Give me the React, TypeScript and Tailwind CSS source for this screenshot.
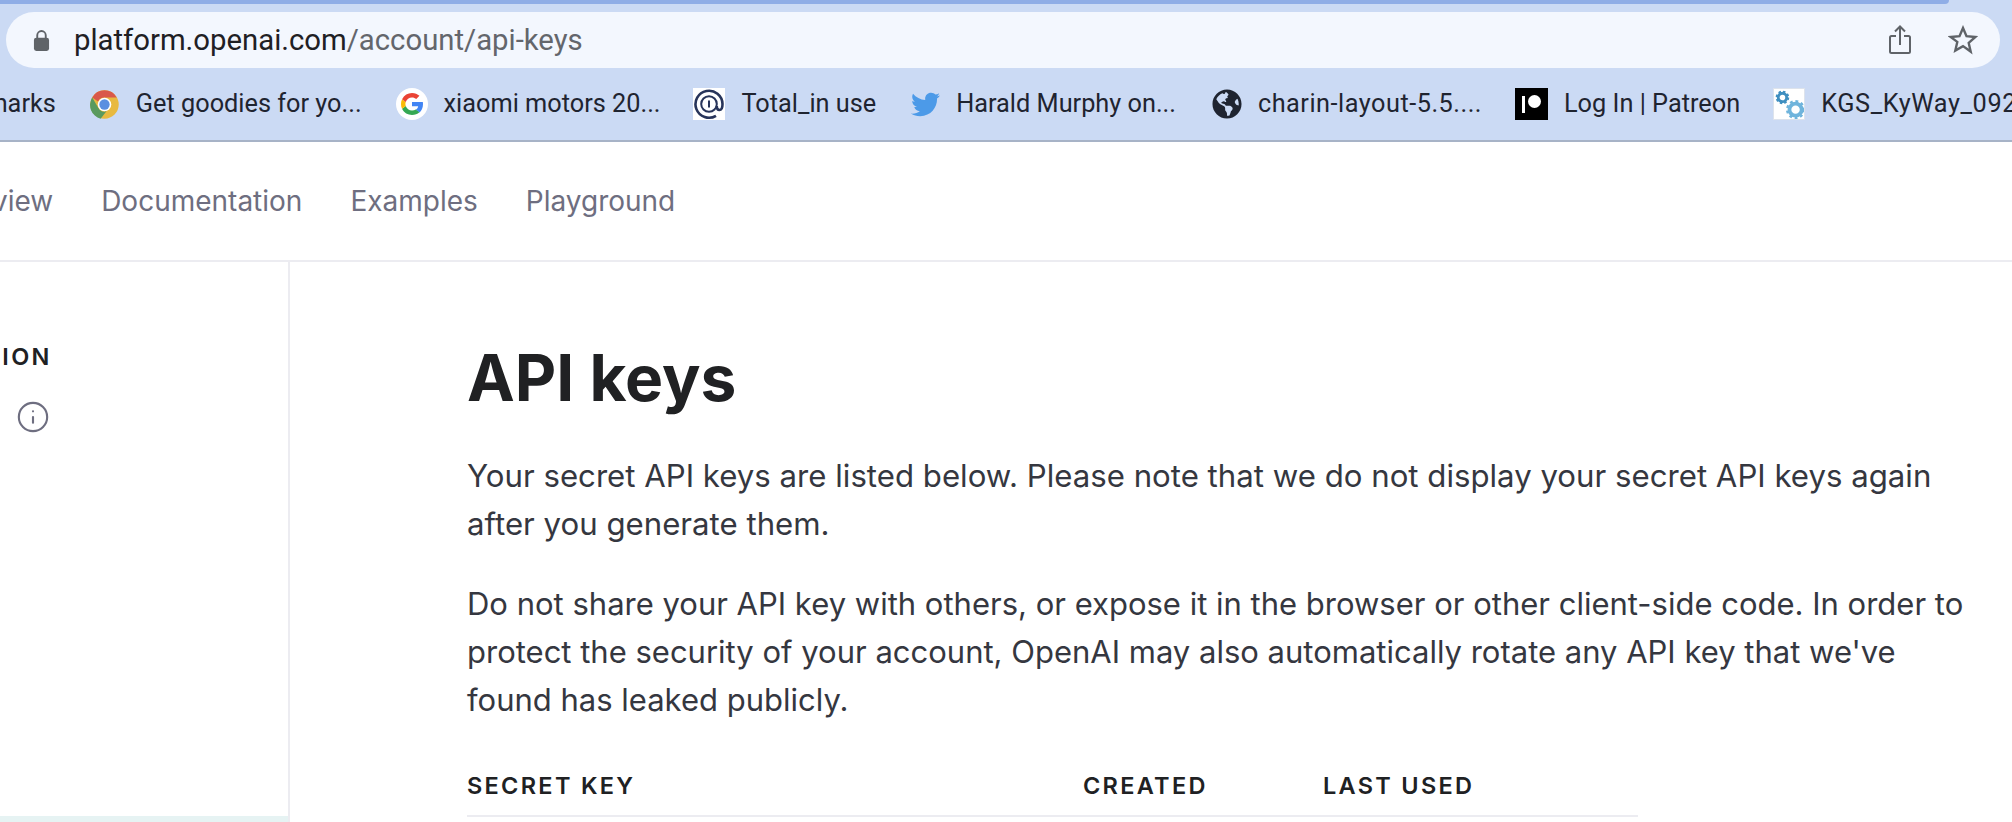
import React from "react";
import { FaTwitter, FaGlobeAmericas } from "react-icons/fa";
import { Info } from "lucide-react";

const Chrome = () => (
  <svg viewBox="0 0 48 48" className="w-[31px] h-[31px]">
    <circle cx="24" cy="24" r="22" fill="#e8b93f" />
    <path d="M24 2a22 22 0 0 1 19 11H24a11 11 0 0 0-10 6.500L5 13A22 22 0 0 1 24 2z" fill="#d9584a" />
    <path d="M5 13l9.500 16.500A11 11 0 0 0 27 34.600L18 46A22 22 0 0 1 5 13z" fill="#5a9a5e" />
    <circle cx="24" cy="24" r="10.500" fill="#fff" />
    <circle cx="24" cy="24" r="8" fill="#5b8fe0" />
  </svg>
);

const Google = () => (
  <span className="w-[32px] h-[32px] rounded-full bg-white flex items-center justify-center">
    <svg viewBox="0 0 48 48" className="w-[24px] h-[24px]">
      <path fill="#4285F4" d="M46 24.500c0-1.600-.1-3.100-.4-4.500H24v8.600h12.400c-.5 2.900-2.200 5.300-4.600 6.900l7.200 5.600C43.200 37.200 46 31.400 46 24.500z" />
      <path fill="#34A853" d="M24 46c6 0 11-2 14.800-5.400l-7.200-5.600c-2 1.300-4.600 2.100-7.600 2.100-5.800 0-10.800-3.900-12.500-9.200l-7.400 5.700C8.300 41.800 15.600 46 24 46z" />
      <path fill="#FBBC05" d="M11.500 27.900c-.5-1.300-.7-2.600-.7-3.900s.3-2.700.7-3.900l-7.400-5.700C2.700 17.200 2 20.500 2 24s.7 6.800 2.100 9.600l7.400-5.700z" />
      <path fill="#EA4335" d="M24 10.800c3.300 0 6.200 1.100 8.500 3.300l6.400-6.400C35 4.100 30 2 24 2 15.600 2 8.300 6.200 4.100 14.400l7.400 5.700c1.700-5.300 6.700-9.300 12.500-9.300z" />
    </svg>
  </span>
);

const AtIcon = () => (
  <span className="w-[32px] h-[32px] bg-white flex items-center justify-center">
    <svg viewBox="0 0 32 32" className="w-[32px] h-[32px]" fill="none" stroke="#27345a">
      <path d="M23 27.800A13.500 13.500 0 1 1 29.500 16c0 3.200-1 6-3 6s-2.800-1.800-2.800-4" strokeWidth="2.600" />
      <circle cx="16" cy="16" r="7.800" strokeWidth="2" />
      <path d="M16 12.500v7" strokeWidth="2" />
    </svg>
  </span>
);

const Patreon = () => (
  <span className="w-[33px] h-[32px] bg-black flex items-center justify-center">
    <svg viewBox="0 0 33 32" className="w-[33px] h-[32px]">
      <rect x="7" y="8" width="3" height="17" fill="#fff" />
      <circle cx="19.500" cy="13.500" r="6.500" fill="#fff" />
    </svg>
  </span>
);

const Gears = () => (
  <span className="w-[32px] h-[32px] bg-white border border-[#dde3ec]">
    <svg viewBox="0 0 32 32" className="w-full h-full" fill="none">
      <circle cx="9" cy="9" r="4.500" stroke="#3f8fc0" strokeWidth="3" />
      <circle cx="9" cy="9" r="6" stroke="#3f8fc0" strokeWidth="2.500" strokeDasharray="2.500 2.200" />
      <circle cx="23" cy="22" r="6.500" stroke="#6fb4dc" strokeWidth="4" />
      <circle cx="23" cy="22" r="9" stroke="#6fb4dc" strokeWidth="2.500" strokeDasharray="3 3" />
    </svg>
  </span>
);

const Lock = () => (
  <svg viewBox="0 0 18 24" className="w-[17px] h-[23px]" fill="none">
    <path d="M4.500 10V6.500a4.500 4.500 0 0 1 9 0V10" stroke="#5f6368" strokeWidth="2" />
    <rect x="1" y="9" width="16" height="14" rx="2.500" fill="#5f6368" />
  </svg>
);

const ShareIcon = () => (
  <svg viewBox="0 0 24 32" className="w-[24px] h-[32px]" fill="none" stroke="#5f6368" strokeWidth="2">
    <path d="M12 21V3M7 7.500 12 2.500l5 5" />
    <path d="M8 12H3.500A1.500 1.500 0 0 0 2 13.500v14A1.500 1.500 0 0 0 3.500 29h17a1.500 1.500 0 0 0 1.500-1.500v-14a1.500 1.500 0 0 0-1.500-1.500H16" />
  </svg>
);

const StarIcon = () => (
  <svg viewBox="0 0 30 30" className="w-[30px] h-[30px]" fill="none" stroke="#5f6368" strokeWidth="2.400" strokeLinejoin="miter">
    <path d="M15 3l3.500 8.200 8.900.8-6.700 5.900 2 8.700L15 21.100 7.300 25.600l2-8.700L2.600 12l8.900-.8z" />
  </svg>
);

function Mark({ icon, label, className = "" }: { icon?: React.ReactNode; label: string; className?: string }) {
  return (
    <div className={"flex items-center shrink-0 gap-[16px] " + className}>
      {icon}
      <span className="whitespace-nowrap">{label}</span>
    </div>
  );
}

export default function App() {
  return (
    <div className="w-[2012px] h-[822px] overflow-hidden bg-white flex flex-col font-['Inter',sans-serif]">
      <div className="h-[142px] shrink-0 bg-[#cbdaf4] border-b-2 border-[#a7b3c7] flex flex-col overflow-hidden">
        <div className="h-[4px] w-[1949px] shrink-0 bg-[#8fade6] rounded-br-[6px]" />
        <div className="mt-[8px] ml-[6px] w-[1994px] h-[56px] shrink-0 rounded-[28px] bg-[#f3f7fe] flex items-center pl-[27px] pr-[22px]">
          <Lock />
          <div className="ml-[24px] pt-[1px] text-[29.3px] whitespace-nowrap text-[#1f2024] font-['Roboto',sans-serif]">
            platform.openai.com<span className="text-[#63666c]">/account/api-keys</span>
          </div>
          <div className="ml-auto flex items-center gap-[36px]">
            <ShareIcon />
            <StarIcon />
          </div>
        </div>
        <div className="flex-1 flex items-center gap-[33px] text-[25.3px] text-[#1f2430] font-['Roboto',sans-serif]">
          <Mark label="Bookmarks" className="-ml-[72px]" />
          <Mark icon={<Chrome />} label="Get goodies for yo..." />
          <Mark icon={<Google />} label="xiaomi motors 20..." className="ml-[1px]" />
          <Mark icon={<AtIcon />} label="Total_in use" />
          <Mark icon={<FaTwitter className="w-[29px] h-[29px] text-[#4c9ae8]" />} label="Harald Murphy on..." className="ml-[2px]" />
          <Mark icon={<FaGlobeAmericas className="w-[30px] h-[30px] text-[#1f2430]" />} label="charin-layout-5.5...." className="ml-[3px] tracking-[0.5px]" />
          <Mark icon={<Patreon />} label="Log In | Patreon" />
          <Mark icon={<Gears />} label="KGS_KyWay_0921" className="tracking-[0.6px]" />
        </div>
      </div>

      <nav className="h-[120px] shrink-0 border-b-2 border-[#ececf1] flex items-center gap-[48px] text-[28px] text-[#6e6e80]">
        <span className="-ml-[72px]">Overview</span>
        <span>Documentation</span>
        <span>Examples</span>
        <span>Playground</span>
      </nav>

      <div className="flex-1 flex min-h-0">
        <aside className="w-[290px] shrink-0 border-r-2 border-[#ececf1] flex flex-col">
          <div className="mt-[81px] -ml-[156px] text-[23.5px] leading-[28px] font-semibold tracking-[2.3px] text-[#202123] whitespace-nowrap">
            ORGANIZATION
          </div>
          <div className="mt-[29px] ml-[16px]">
            <Info className="w-[34px] h-[34px] text-[#6e6e80]" strokeWidth={1.5} />
          </div>
          <div className="mt-auto h-[6px] bg-[#e6f3f3]" />
        </aside>

        <main className="flex-1 pl-[177px] min-w-0">
          <h1 className="mt-[80px] text-[64px] leading-[72px] font-bold text-[#202123]">API keys</h1>
          <p className="mt-[38px] w-[1520px] text-[31.2px] leading-[48px] text-[#353740]">
            Your secret API keys are listed below. Please note that we do not display your secret API keys again after you generate them.
          </p>
          <p className="mt-[32px] w-[1520px] text-[31px] leading-[48px] text-[#353740]">
            Do not share your API key with others, or expose it in the browser or other client-side code. In order to protect the security of your account, OpenAI may also automatically rotate any API key that we've found has leaked publicly.
          </p>
          <div className="mt-[48px] w-[1171px] h-[45px] border-b-2 border-[#ececf1] flex text-[23.5px] leading-[28px] font-semibold tracking-[2.3px] text-[#202123]">
            <span className="w-[616px]">SECRET KEY</span>
            <span className="w-[240px]">CREATED</span>
            <span>LAST USED</span>
          </div>
        </main>
      </div>
    </div>
  );
}
